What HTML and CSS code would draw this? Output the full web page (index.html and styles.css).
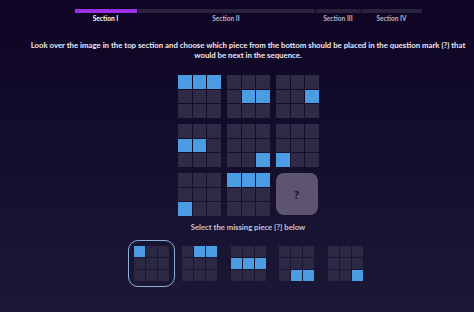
FILE: index.html
```html
<!DOCTYPE html>
<html lang="en">
<head>
  <meta charset="UTF-8">
  <meta name="viewport" content="width=device-width, initial-scale=1.0">
  <title>Sequence puzzle</title>
  <link rel="stylesheet" href="styles.css">
</head>
<body>
  <div class="page">
    <div class="progress">
      <div class="seg seg_1 active"></div>
      <div class="seg seg_2"></div>
      <div class="seg seg_3"></div>
      <div class="seg seg_4"></div>
    </div>
    <div class="labels">
      <span class="seg_1 current">Section I</span>
      <span class="seg_2">Section II</span>
      <span class="seg_3">Section III</span>
      <span class="seg_4">Section IV</span>
    </div>

    <p class="question">Look over the image in the top section and choose which piece from the bottom should be placed in the question mark (?) that would be next in the sequence.</p>

    <div class="board">
      <div class="piece"><i class="on"></i><i class="on"></i><i class="on"></i><i></i><i></i><i></i><i></i><i></i><i></i></div>
      <div class="piece"><i></i><i></i><i></i><i></i><i class="on"></i><i class="on"></i><i></i><i></i><i></i></div>
      <div class="piece"><i></i><i></i><i></i><i></i><i></i><i class="on"></i><i></i><i></i><i></i></div>
      <div class="piece"><i></i><i></i><i></i><i class="on"></i><i class="on"></i><i></i><i></i><i></i><i></i></div>
      <div class="piece"><i></i><i></i><i></i><i></i><i></i><i></i><i></i><i></i><i class="on"></i></div>
      <div class="piece"><i></i><i></i><i></i><i></i><i></i><i></i><i class="on"></i><i></i><i></i></div>
      <div class="piece"><i></i><i></i><i></i><i></i><i></i><i></i><i class="on"></i><i></i><i></i></div>
      <div class="piece"><i class="on"></i><i class="on"></i><i class="on"></i><i></i><i></i><i></i><i></i><i></i><i></i></div>
      <div class="missing">?</div>
    </div>

    <p class="hint">Select the missing piece [?] below</p>

    <div class="options">
      <div class="piece small selected"><i class="on"></i><i></i><i></i><i></i><i></i><i></i><i></i><i></i><i></i></div>
      <div class="piece small"><i></i><i class="on"></i><i class="on"></i><i></i><i></i><i></i><i></i><i></i><i></i></div>
      <div class="piece small"><i></i><i></i><i></i><i class="on"></i><i class="on"></i><i class="on"></i><i></i><i></i><i></i></div>
      <div class="piece small"><i></i><i></i><i></i><i></i><i></i><i></i><i></i><i class="on"></i><i class="on"></i></div>
      <div class="piece small"><i></i><i></i><i></i><i></i><i></i><i></i><i></i><i></i><i class="on"></i></div>
    </div>
  </div>
</body>
</html>
```

FILE: styles.css
```css
* {
  margin: 0;
  padding: 0;
  box-sizing: border-box;
}
:root {
  --cell: #2f2b47;
  --blue: #4b9ce2;
  --purple: #9c2fe6;
}
html, body {
  height: 100%;
}
body {
  background: linear-gradient(#0e0424, #1b1836);
  font-family: Lato, "Open Sans", sans-serif;
  font-weight: 700;
  color: #fff;
  overflow: hidden;
}
/* 内容整体略偏右，中心在 248px */
.page {
  display: flex;
  flex-direction: column;
  align-items: center;
  padding: 9px 0 0 22px;
}
/* 顶部进度条 */
.progress,
.labels {
  display: flex;
  width: 347px;
}
.progress {
  height: 4px;
  gap: 1px;
}
.seg {
  height: 4px;
  background: #29233f;
}
.seg.active {
  background: var(--purple);
}
.seg_1 { width: 62px; }
.seg_2 { width: 177px; }
.seg_3 { width: 45px; }
.seg_4 { width: 60px; }
.labels {
  margin-top: 1px;
  gap: 1px;
  font-size: 6.6px;
  line-height: 8px;
  color: #b9b5c9;
}
.labels span {
  text-align: center;
}
.labels .current {
  color: #fff;
}
/* 题目说明 */
.question {
  margin-top: 18px;
  width: 438px;
  font-size: 7.8px;
  line-height: 10px;
  text-align: center;
  color: #ece9f4;
}
/* 九宫格 */
.board {
  display: grid;
  grid-template-columns: repeat(3, 43px);
  gap: 6px 6px;
  margin-top: 15px;
}
.piece {
  display: grid;
  grid-template-columns: 14px 13px 14px;
  grid-template-rows: 14px 13px 14px;
  gap: 1px;
}
.piece i {
  background: var(--cell);
}
.piece i.on {
  background: var(--blue);
}
.missing {
  width: 42px;
  height: 42px;
  display: flex;
  align-items: center;
  justify-content: center;
  border-radius: 8px;
  background: #5d5570;
  color: #16112a;
  font-size: 11px;
  font-weight: 900;
}
.hint {
  margin-top: 6px;
  font-size: 7.7px;
  line-height: 10px;
  color: #c8c5d6;
}
/* 选项 */
.options {
  display: flex;
  gap: 13.5px;
  margin-top: 14px;
}
.piece.small {
  grid-template-columns: repeat(3, 11px);
  grid-template-rows: repeat(3, 11px);
}
.piece.small i {
  background: #2b2843;
}
.piece.small i.on {
  background: var(--blue);
}
.piece.selected {
  outline: 1.5px solid #8eb0d9;
  outline-offset: 5px;
  border-radius: 4px;
}
```
